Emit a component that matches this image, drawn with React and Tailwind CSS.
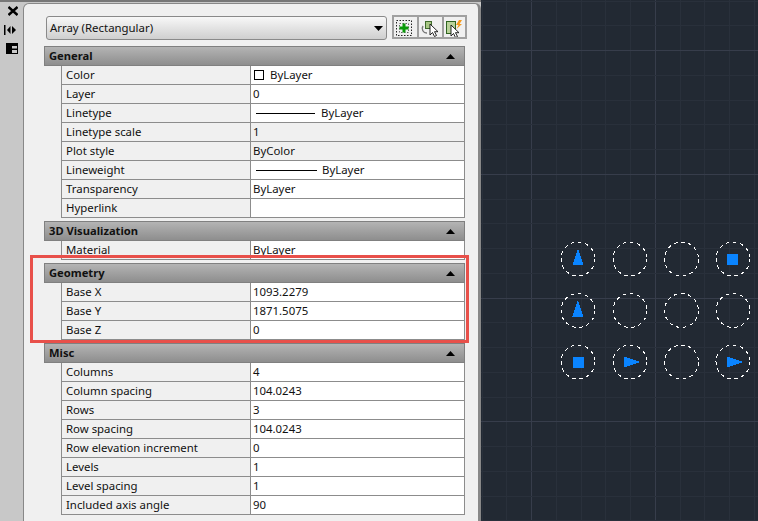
import React from 'react';

const sections = [
  {
    title: 'General',
    rows: [
      { label: 'Color', value: 'ByLayer', kind: 'swatch' },
      { label: 'Layer', value: '0' },
      { label: 'Linetype', value: 'ByLayer', kind: 'line' },
      { label: 'Linetype scale', value: '1', gray: true },
      { label: 'Plot style', value: 'ByColor', gray: true },
      { label: 'Lineweight', value: 'ByLayer', kind: 'weight' },
      { label: 'Transparency', value: 'ByLayer' },
      { label: 'Hyperlink', value: '' },
    ],
  },
  { title: '3D Visualization', rows: [{ label: 'Material', value: 'ByLayer' }] },
  {
    title: 'Geometry',
    rows: [
      { label: 'Base X', value: '1093.2279' },
      { label: 'Base Y', value: '1871.5075' },
      { label: 'Base Z', value: '0' },
    ],
  },
  {
    title: 'Misc',
    rows: [
      { label: 'Columns', value: '4' },
      { label: 'Column spacing', value: '104.0243' },
      { label: 'Rows', value: '3' },
      { label: 'Row spacing', value: '104.0243' },
      { label: 'Row elevation increment', value: '0' },
      { label: 'Levels', value: '1' },
      { label: 'Level spacing', value: '1' },
      { label: 'Included axis angle', value: '90' },
    ],
  },
];

const Caret = ({ up }) => (
  <svg width="9" height="5" viewBox="0 0 9 5" className="shrink-0">
    <path d={up ? 'M4.5 0L9 5H0Z' : 'M4.5 5L0 0H9Z'} fill="#000" />
  </svg>
);

const Row = ({ row }) => (
  <div className="flex h-[19px] border-b border-[#8c8c8c]">
    <div className="flex w-[190px] items-center border-x border-[#8c8c8c] bg-[#f0f0f0] pl-[4px]">
      {row.label}
    </div>
    <div className={`flex w-[214px] items-center border-r border-[#8c8c8c] pl-[2px] ${row.gray ? 'bg-[#f0f0f0]' : 'bg-white'}`}>
      {row.kind === 'swatch' && <span className="ml-px mr-[6px] h-[10px] w-[10px] border border-black bg-white" />}
      {row.kind === 'line' && <span className="ml-[3px] mr-[6px] h-px w-[59px] bg-black" />}
      {row.kind === 'weight' && <span className="ml-[3px] mr-[5px] h-px w-[61px] bg-black" />}
      {row.value}
    </div>
  </div>
);

const Section = ({ section }) => (
  <div className="w-[421px]">
    <div className="flex h-[20px] items-center justify-between border border-[#808080] bg-gradient-to-b from-[#b4b4b4] to-[#8e8e8e] pl-[4px] pr-[9px] text-[11.2px] font-bold">
      <span>{section.title}</span>
      <Caret up />
    </div>
    <div className="ml-[17px]">
      {section.rows.map(row => <Row key={row.label} row={row} />)}
    </div>
  </div>
);

const SideIcons = () => (
  <div className="flex w-[23px] shrink-0 flex-col items-start pt-[4px]">
    <svg width="10" height="10" viewBox="0 0 10 10" className="ml-[8px]">
      <path d="M.5 1L9.5 9M9.5 1L.5 9" stroke="#000" strokeWidth="2.4" />
    </svg>
    <svg width="12" height="10" viewBox="0 0 12 10" className="ml-[4px] mt-[9px]">
      <path d="M0 0H1.5V10H0ZM3 5L6.5 1V9ZM8 1L12 5L8 9Z" fill="#000" />
    </svg>
    <svg width="12" height="11" viewBox="0 0 12 11" className="ml-[6px] mt-[8px]">
      <path d="M0 0H12V11H0Z" fill="#000" />
      <path d="M6 3H11V5.5H6ZM6 7H11V10H6Z" fill="#c8c8c8" />
    </svg>
  </div>
);

const cursor = (x, y) => `M${x} ${y}v11l2.5-2.5l2 4l2-1l-2-3.8h3.5Z`;

const Toolbar = () => (
  <div className="-mt-[1px] flex h-[24px] w-[75px] border-2 border-[#a0a0a0]">
    <div className="h-full w-[25px] border-r-2 border-[#a0a0a0]">
      <svg width="23" height="20" viewBox="394 17 23 20" className="block">
        <rect x="396.5" y="20.5" width="15" height="15" fill="none" stroke="#222" strokeDasharray="1.5 1.5" />
        <rect x="399.5" y="23.5" width="9" height="9" fill="none" stroke="#666" strokeDasharray="1.5 1.5" />
        <path d="M402.5 23.5H405.5V26.5H408.5V29.5H405.5V32.5H402.5V29.5H399.5V26.5H402.5Z" fill="#0a9a0a" />
      </svg>
    </div>
    <div className="h-full w-[25px] border-r-2 border-[#a0a0a0]">
      <svg width="23" height="20" viewBox="419 17 23 20" className="block">
        <path d="M427 33A4.5 4.5 0 0 1 423 26" fill="none" stroke="#777" strokeWidth="1.4" />
        <rect x="425.5" y="21.5" width="6" height="7" fill="#a8c784" stroke="#3f6b2c" />
        <path d={cursor(430, 24)} fill="#fff" stroke="#111" strokeWidth=".9" />
      </svg>
    </div>
    <div className="h-full w-[21px]">
      <svg width="21" height="20" viewBox="444 17 21 20" className="block">
        <rect x="446.5" y="21.5" width="9" height="12" fill="#b9d29a" stroke="#2f6420" />
        <path d={cursor(451, 25)} fill="#fff" stroke="#111" strokeWidth=".9" />
        <path d="M459 20L456 25H458.5L456.5 29L462 24H459.5L462 20Z" fill="#f59a1c" />
      </svg>
    </div>
  </div>
);

const gridX = Array.from({ length: 12 }, (_, i) => 482 + i * 24.75);
const gridY = Array.from({ length: 22 }, (_, i) => 1 + i * 24.75);

const circleX = [578, 630, 681.5, 733];
const circleY = [259, 310.5, 362];

const Canvas = () => (
  <div className="min-w-0 flex-1 bg-[#222933]">
    <svg viewBox="481 0 277 521" className="block h-full w-full">
      {gridX.map((x, i) => (
        <line key={x} x1={Math.floor(x) + 0.5} x2={Math.floor(x) + 0.5} y1="0" y2="521" stroke={i % 5 === 2 ? '#373d4b' : '#29303b'} />
      ))}
      {gridY.map((y, i) => (
        <line key={y} y1={Math.floor(y) + 0.5} y2={Math.floor(y) + 0.5} x1="481" x2="758" stroke={i % 5 === 2 ? '#373d4b' : '#29303b'} />
      ))}
      {circleY.map(cy => circleX.map(cx => (
        <circle key={`${cx}-${cy}`} cx={cx} cy={cy} r="17" fill="none" stroke="#fff" strokeDasharray="3.6 3.6" shapeRendering="crispEdges" />
      )))}
      <g fill="#0a84ff" shapeRendering="crispEdges">
        <path d="M578 248L583.5 265H572.5Z" />
        <path d="M578 300L583.5 316.5H572.5Z" />
        <rect x="727" y="254" width="11" height="11" />
        <rect x="573" y="357" width="11" height="11" />
        <path d="M624 356.5L640.5 362L624 367.5Z" />
        <path d="M727 356.5L743.5 362L727 367.5Z" />
      </g>
    </svg>
  </div>
);

export default function App() {
  return (
    <div className="flex h-[521px] w-[758px] overflow-hidden bg-[#222933] font-['Noto_Sans',sans-serif] text-[11.4px] leading-none text-[#111]">
      <div className="flex w-[481px] shrink-0 border-t-2 border-[#777] bg-[#c8c8c8]">
        <SideIcons />
        <div className="mt-[1px] w-[458px] shrink-0 rounded-t-md border-l border-r-[3px] border-t border-[#888] bg-[#f0f0f0]">
          <div className="relative h-full pl-[20px] pt-[12px]">
            <div className="flex w-[423px] items-start justify-between">
              <div className="ml-[2px] flex h-[24px] w-[341px] items-center justify-between rounded-[3px] border border-[#8a8a8a] bg-gradient-to-b from-[#f8f8f8] to-[#cfcfcf] pl-[3px] pr-[3px]">
                <span>Array (Rectangular)</span>
                <Caret />
              </div>
              <Toolbar />
            </div>
            <div className="mt-[6px] flex flex-col gap-[3px]">
              {sections.map(section => <Section key={section.title} section={section} />)}
            </div>
            <div className="absolute left-[6px] top-[251px] h-[88px] w-[439px] border-[3px] border-[#e8504a]" />
          </div>
        </div>
      </div>
      <Canvas />
    </div>
  );
}
